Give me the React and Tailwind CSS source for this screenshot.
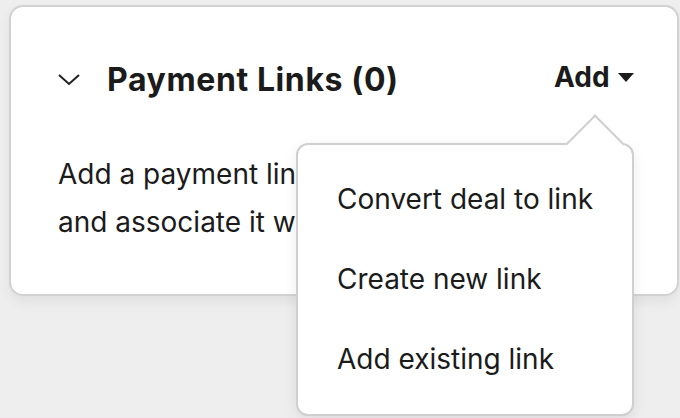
import React from "react";

export default function App() {
  return (
    <div
      className="relative w-[680px] h-[418px] overflow-hidden bg-[#eeeeee] pt-[5px] pl-[9px]"
      style={{ fontFamily: "Inter, 'Noto Sans', sans-serif" }}
    >
      <div className="w-[670px] h-[291px] rounded-[14px] border-2 border-[#d2d2d2] bg-white shadow-[0_6px_12px_rgba(0,0,0,0.06)]">
        <div className="flex items-center h-[146px] pl-[46px] pr-[44px]">
          <svg width="22" height="12" viewBox="0 0 22 12" className="shrink-0 ml-[1px]">
            <path d="M1 1 L11 10 L21 1" fill="none" stroke="#1f1f1f" strokeWidth="2" />
          </svg>
          <span className="ml-[27px] whitespace-nowrap text-[32px] font-bold text-[#1b1b1b] tracking-[0.6px]">
            Payment Links (0)
          </span>
        </div>
      </div>
      <div className="absolute left-[554px] top-[61px] flex items-center gap-[8px]">
        <span className="text-[28px] font-bold text-[#1b1b1b] leading-[32px]">Add</span>
        <svg width="16" height="9" viewBox="0 0 16 9">
          <path d="M0 0 H16 L8 9 Z" fill="#1b1b1b" />
        </svg>
      </div>
      <div className="absolute left-[58px] top-[150px] w-[560px] text-[28px] leading-[48px] text-[#1b1b1b]">
        Add a payment link to this record
        <br />
        and associate it with a deal.
      </div>

      <div className="absolute left-[296px] top-[143px] w-[338px] h-[273px] rounded-[12px] border-2 border-[#cfcfcf] bg-white shadow-[0_4px_14px_rgba(0,0,0,0.08)]">
        <div className="absolute left-[276px] -top-[22px] w-[42px] h-[42px] rotate-45 border-l-2 border-t-2 border-[#cfcfcf] bg-white" />
        <div className="relative flex flex-col pt-[38px] pl-[39px] text-[28px] leading-[32px] text-[#1b1b1b]">
          <div className="h-[80px]">Convert deal to link</div>
          <div className="h-[80px]">Create new link</div>
          <div className="h-[80px]">Add existing link</div>
        </div>
      </div>
    </div>
  );
}
